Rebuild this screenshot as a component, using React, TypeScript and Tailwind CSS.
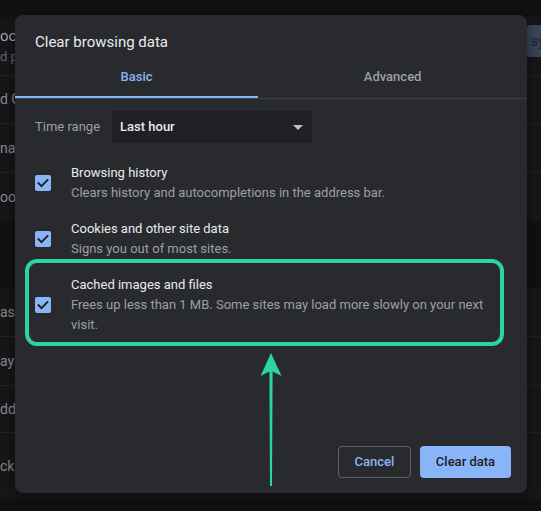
import React from 'react'

function Check() {
  return (
    <div className="w-4 h-4 shrink-0 rounded-[2px] bg-[#8ab4f8] flex items-center justify-center">
      <svg viewBox="0 0 16 16" className="w-4 h-4" fill="none">
        <path d="M3.6 8.2l2.9 2.9 5.9-6" stroke="#202124" strokeWidth="2" strokeLinecap="square" />
      </svg>
    </div>
  )
}

function Option({ title, desc }: { title: string; desc: string }) {
  return (
    <div className="flex items-center gap-5 py-2">
      <Check />
      <div className="text-[13px] leading-5">
        <div className="text-[#e8eaed]">{title}</div>
        <div className="text-[#9aa0a6]">{desc}</div>
      </div>
    </div>
  )
}

function BgRow({ text, h, last }: { text: string; h: string; last?: boolean }) {
  return (
    <div className={`flex items-center ${h} ${last ? '' : 'border-b border-[#232326]'}`}>
      <span className="text-[14px] text-[#8d8e91] whitespace-nowrap">{text}</span>
    </div>
  )
}

export default function App() {
  return (
    <div className="relative w-[541px] h-[511px] overflow-hidden bg-[#111113] font-['Roboto',sans-serif]">
      {/* Settings page behind the scrim */}
      <div className="flex flex-col pt-[17px]">
        <div className="bg-[#17171a]">
          <div className="flex h-[59px] border-b border-[#232326] overflow-hidden">
            <div className="w-[527px] shrink-0 flex flex-col justify-center">
              <span className="text-[15px] leading-5 text-[#a9aaad] whitespace-nowrap">oog</span>
              <span className="text-[13px] leading-5 text-[#68696c] whitespace-nowrap mt-[1px]">d pa</span>
            </div>
            <div className="mt-2 h-8 w-[40px] shrink-0 bg-[#3a465c] rounded-l-[3px] flex items-center pl-1 text-[14px] text-[#202226]">
              sync
            </div>
          </div>
          <BgRow text="d Go" h="h-[48px]" />
          <BgRow text="nam" h="h-[49px]" />
          <BgRow text="ook" h="h-[48px]" last />
        </div>
        <div className="h-[67px]" />
        <div className="bg-[#17171a] h-[211px]">
          <BgRow text="ass" h="h-[49px]" />
          <BgRow text="aym" h="h-[49px]" />
          <BgRow text="ddr" h="h-[47px]" />
          <BgRow text="ck" h="h-[66px]" last />
        </div>
      </div>

      {/* Dialog */}
      <div className="absolute left-[15px] top-[15px] w-[512px] h-[478px] bg-[#292a2d] rounded-lg shadow-[0_4px_16px_rgba(0,0,0,0.5)] flex flex-col">
        <div className="px-5 pt-[17px] text-[15px] leading-5 text-[#e8eaed]">Clear browsing data</div>

        <div className="flex mt-[3px] border-b border-[#3c4043]">
          <div className="flex-auto h-[43px] pt-[2px] flex items-center justify-center border-b-2 border-[#8ab4f8] text-[13px] font-medium text-[#8ab4f8]">
            Basic
          </div>
          <div className="flex-auto h-[43px] pt-[2px] flex items-center justify-center border-b-2 border-transparent text-[13px] font-medium text-[#9aa0a6]">
            Advanced
          </div>
        </div>

        <div className="px-5">
          <div className="flex items-center mt-3 mb-3">
            <span className="w-[77px] text-[13px] text-[#9aa0a6]">Time range</span>
            <div className="w-[200px] h-8 rounded bg-[#1f2023] flex items-center justify-between pl-2 pr-[9px]">
              <span className="text-[13px] font-medium text-[#e8eaed]">Last hour</span>
              <svg viewBox="0 0 10 5" className="w-[10px] h-[5px]">
                <path d="M0 0h10L5 5z" fill="#bdc1c6" />
              </svg>
            </div>
          </div>
          <Option title="Browsing history" desc="Clears history and autocompletions in the address bar." />
          <Option title="Cookies and other site data" desc="Signs you out of most sites." />
          <Option
            title="Cached images and files"
            desc="Frees up less than 1 MB. Some sites may load more slowly on your next visit."
          />
        </div>

        <div className="flex-1" />

        <div className="flex justify-end gap-[9px] px-4 pb-[15px]">
          <button className="h-8 w-[73px] rounded border border-[#5f6368] text-[13px] font-medium text-[#8ab4f8]">
            Cancel
          </button>
          <button className="h-8 w-[91px] rounded bg-[#8ab4f8] text-[13px] font-medium text-[#202124]">
            Clear data
          </button>
        </div>

        {/* Annotation: highlight box */}
        <div className="absolute left-[10px] top-[244px] w-[479px] h-[87px] rounded-[12px] border-4 border-[#2bd59c] pointer-events-none" />

        {/* Annotation: arrow */}
        <svg className="absolute left-0 top-0 w-[512px] h-[478px] pointer-events-none" viewBox="0 0 512 478">
          <path
            d="M256 338 L266.5 361 L257.6 356.5 L257 471 L255 471 L254.4 356.5 L245.5 361 Z"
            fill="#2bd59c"
          />
        </svg>
      </div>
    </div>
  )
}
